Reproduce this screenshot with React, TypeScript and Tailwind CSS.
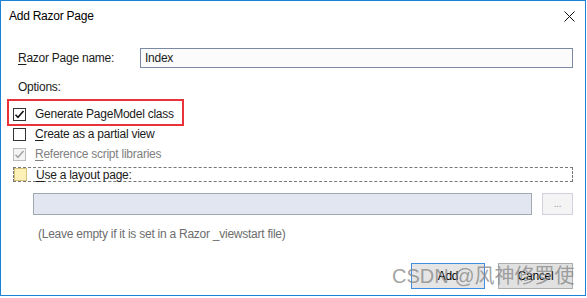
import React from "react";

const font = { fontFamily: '"Segoe UI", "Liberation Sans", Arial, sans-serif' };

function Check({ color }: { color: string }) {
  return (
    <svg width="11" height="11" viewBox="0 0 11 11">
      <path d="M1.5 5.8 L4 8.3 L9.5 2" fill="none" stroke={color} strokeWidth="1.6" />
    </svg>
  );
}

function Box({
  checked,
  variant = "normal",
}: {
  checked?: boolean;
  variant?: "normal" | "disabled" | "focus";
}) {
  const cls =
    variant === "disabled"
      ? "border-[#bcbcbc] bg-[#f4f4f4]"
      : variant === "focus"
        ? "border-[#d8c27a] bg-[#fdf1b8]"
        : "border-[#333333] bg-white";
  return (
    <div
      className={`w-[13px] h-[13px] border flex items-center justify-center shrink-0 ${cls}`}
    >
      {checked && <Check color={variant === "disabled" ? "#a6a6a6" : "#111111"} />}
    </div>
  );
}

export default function App() {
  return (
    <div
      className="relative w-[587px] h-[298px] bg-white overflow-hidden text-[12px] tracking-[-0.25px] text-[#1b1b1b]"
      style={font}
    >
      <div className="w-[586px] h-[296px] border border-[#1883d7] bg-white flex flex-col">
        {/* title bar */}
        <div className="h-[29px] flex items-center justify-between pl-[8px] pr-[10px]">
          <span className="text-[12px] text-black">Add Razor Page</span>
          <svg width="11" height="11" viewBox="0 0 11 11" className="mt-[1px]">
            <path d="M0.5 0.5 L10.5 10.5 M10.5 0.5 L0.5 10.5" stroke="#111" strokeWidth="1" />
          </svg>
        </div>

        <div className="flex flex-col pl-[12px] pr-[12px]">
          {/* name */}
          <div className="mt-[18px] h-[20px] flex items-center">
            <span className="w-[122px] ml-[5px]">
              <span className="underline underline-offset-2">R</span>azor Page name:
            </span>
            <div className="flex-1 h-[20px] border border-[#7a8aa2] bg-[#fbfbfb] flex items-center px-[4px]">
              Index
            </div>
          </div>

          <div className="mt-[9px] h-[20px] flex items-center ml-[5px]">Options:</div>

          {/* checkbox rows */}
          <div className="mt-[7px] relative h-[20px] flex items-center gap-[9px]">
            <Box checked />
            <span>Generate PageModel class</span>
            <div className="absolute left-[-6px] top-[-5px] w-[177px] h-[27px] border-2 border-[#e8333a]" />
          </div>
          <div className="h-[20px] flex items-center gap-[9px]">
            <Box />
            <span>
              <span className="underline underline-offset-2">C</span>reate as a partial view
            </span>
          </div>
          <div className="h-[20px] flex items-center gap-[9px] text-[#808080]">
            <Box checked variant="disabled" />
            <span>
              <span className="underline underline-offset-2">R</span>eference script libraries
            </span>
          </div>
          <div className="mt-[3px] h-[15px] flex items-center gap-[9px] border border-dashed border-[#777777]">
            <Box variant="focus" />
            <span>
              <span className="underline underline-offset-2">U</span>se a layout page:
            </span>
          </div>

          {/* layout path */}
          <div className="mt-[11px] ml-[20px] flex items-center gap-[10px]">
            <div className="flex-1 h-[22px] border border-[#a3a9b3] bg-[#e1e6f0]" />
            <div className="w-[31px] h-[22px] border border-[#d2d2dc] bg-[#f4f4f4] flex items-center justify-center text-[#9a9a9a] text-[10px] leading-none">
              ...
            </div>
          </div>

          <div className="mt-[9px] ml-[25px] h-[20px] flex items-center text-[#6d6d6d]">
            (Leave empty if it is set in a Razor _viewstart file)
          </div>

          {/* buttons */}
          <div className="mt-[19px] flex justify-end gap-[13px]">
            <button className="w-[74px] h-[26px] border border-[#3d8ee0] bg-[#e5e5e5] text-black">
              Add
            </button>
            <button className="w-[75px] h-[26px] border border-[#adadad] bg-[#e1e1e1] text-black">
              Cancel
            </button>
          </div>
        </div>
      </div>

      {/* watermark */}
      <div
        className="absolute left-[392px] top-[262px] text-[20px] leading-[28px] tracking-normal text-[#8a8a8a]/80 whitespace-nowrap pointer-events-none"
        style={{ fontFamily: '"Liberation Sans", "Noto Sans CJK SC", sans-serif' }}
      >
        CSDN @风神修罗使
      </div>
    </div>
  );
}
